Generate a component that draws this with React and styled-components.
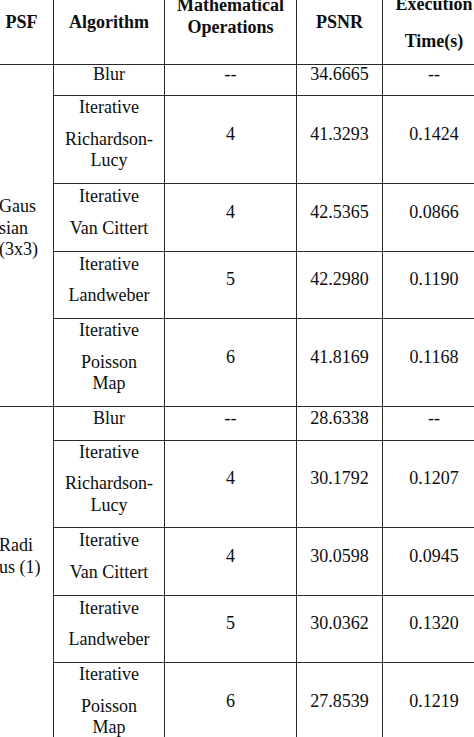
import styled, { createGlobalStyle } from 'styled-components';

const GlobalStyle = createGlobalStyle`
  html, body {
    margin: 0;
    padding: 0;
    background: #fff;
    overflow: hidden;
  }
  body {
    font-family: "Liberation Serif", "Times New Roman", serif;
    color: #0d0d0d;
  }
`;

const Page = styled.div`
  width: 474px;
  height: 737px;
  overflow: hidden;
  background: #fff;
`;

// the table is a crop of a bigger one: its left edge lies off the page
const Table = styled.div`
  display: grid;
  grid-template-columns: 63px 110px 131px 85px 102px;
  grid-template-rows: ${props => props.$rows.map(h => `${h}px`).join(' ')};
  gap: 1px;
  background: #2a2a2a;
  margin-left: -10px;
  width: max-content;
`;

const HeadCell = styled.div`
  background: #fff;
  display: flex;
  flex-direction: column;
  align-items: center;
  justify-content: flex-start;
  text-align: center;
  padding: 0 10px;
  min-width: 0;
`;

const HeadLine = styled.div`
  font-weight: 700;
  font-size: 18px;
  line-height: 21.5px;
  margin-top: ${props => props.$top || 0}px;
  margin-bottom: ${props => props.$gap || 0}px;
`;

const Cell = styled.div`
  background: #fff;
  display: flex;
  flex-direction: column;
  align-items: center;
  justify-content: center;
  text-align: center;
  padding: 0 10px;
  min-width: 0;
`;

const Para = styled.div`
  font-size: 18px;
  line-height: 21.5px;
  margin-bottom: 10px;
`;

const PsfCell = styled.div`
  background: #fff;
  grid-row: span ${props => props.$span};
  display: flex;
  flex-direction: column;
  justify-content: center;
  align-items: flex-start;
  padding: 0 0 ${props => props.$pad}px 9px;
`;

const PsfText = styled.div`
  width: 42.5px;
  font-size: 18px;
  line-height: 21.5px;
  text-align: left;
  overflow-wrap: anywhere;
`;

const groups = [
  {
    psf: 'Gaussian (3x3)',
    pad: 14,
    rows: [
      { h: 30, algo: ['Blur'], ops: '--', psnr: '34.6665', time: '--' },
      { h: 87, algo: ['Iterative', 'Richardson-Lucy'], ops: '4', psnr: '41.3293', time: '0.1424' },
      { h: 67, algo: ['Iterative', 'Van Cittert'], ops: '4', psnr: '42.5365', time: '0.0866' },
      { h: 66, algo: ['Iterative', 'Landweber'], ops: '5', psnr: '42.2980', time: '0.1190' },
      { h: 87, algo: ['Iterative', 'Poisson Map'], ops: '6', psnr: '41.8169', time: '0.1168' },
    ],
  },
  {
    psf: 'Radius (1)',
    pad: 44,
    rows: [
      { h: 33, algo: ['Blur'], ops: '--', psnr: '28.6338', time: '--' },
      { h: 86, algo: ['Iterative', 'Richardson-Lucy'], ops: '4', psnr: '30.1792', time: '0.1207' },
      { h: 67, algo: ['Iterative', 'Van Cittert'], ops: '4', psnr: '30.0598', time: '0.0945' },
      { h: 66, algo: ['Iterative', 'Landweber'], ops: '5', psnr: '30.0362', time: '0.1320' },
      { h: 87, algo: ['Iterative', 'Poisson Map'], ops: '6', psnr: '27.8539', time: '0.1219' },
    ],
  },
];

const rowHeights = [64, ...groups.flatMap(g => g.rows.map(r => r.h))];

export default function App() {
  return (
    <Page>
      <GlobalStyle />
      <Table $rows={rowHeights}>
        <HeadCell><HeadLine $top={12}>PSF</HeadLine></HeadCell>
        <HeadCell><HeadLine $top={12}>Algorithm</HeadLine></HeadCell>
        <HeadCell><HeadLine $top={-5}>Mathematical Operations</HeadLine></HeadCell>
        <HeadCell><HeadLine $top={12}>PSNR</HeadLine></HeadCell>
        <HeadCell>
          <HeadLine $top={-6} $gap={15.5}>Execution</HeadLine>
          <HeadLine>Time(s)</HeadLine>
        </HeadCell>

        {groups.map(group => [
          <PsfCell key={group.psf} $span={group.rows.length} $pad={group.pad}>
            <PsfText>{group.psf}</PsfText>
          </PsfCell>,
          ...group.rows.flatMap((row, i) => [
            <Cell key={`${group.psf}-a${i}`}>
              {row.algo.map(p => <Para key={p}>{p}</Para>)}
            </Cell>,
            <Cell key={`${group.psf}-o${i}`}><Para>{row.ops}</Para></Cell>,
            <Cell key={`${group.psf}-p${i}`}><Para>{row.psnr}</Para></Cell>,
            <Cell key={`${group.psf}-t${i}`}><Para>{row.time}</Para></Cell>,
          ]),
        ])}
      </Table>
    </Page>
  );
}
